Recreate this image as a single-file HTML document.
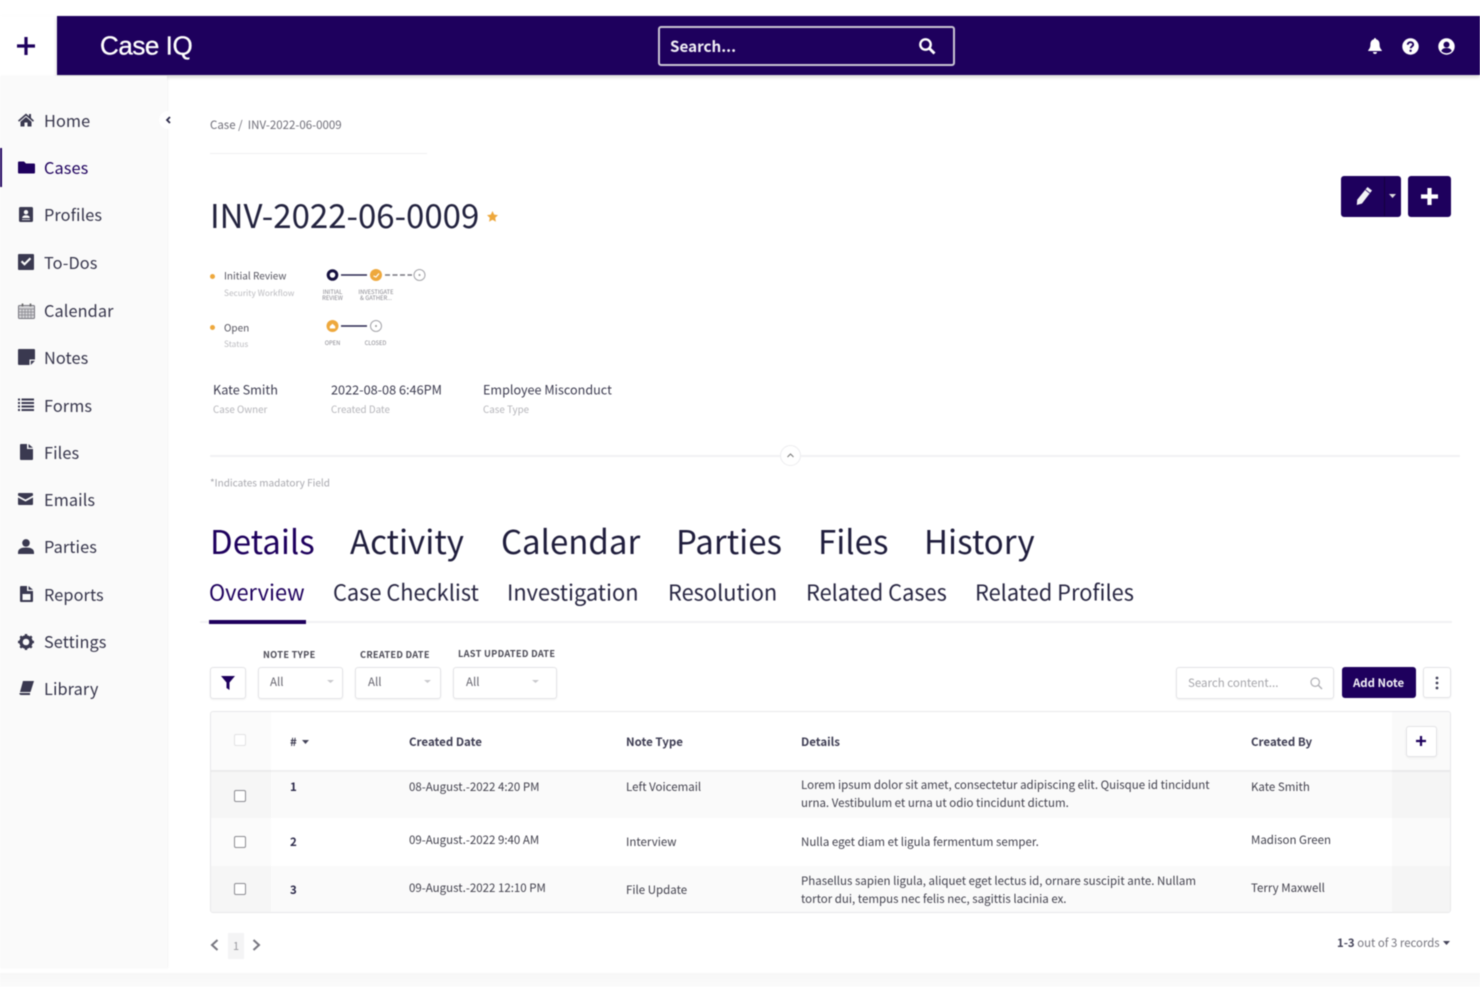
<!DOCTYPE html>
<html><head><meta charset="utf-8"><title>Case IQ</title>
<style>
html,body{margin:0;padding:0;background:#fff}
#p{position:relative;width:1480px;height:987px;overflow:hidden;background:#fff;font-family:"Noto Sans CJK SC","Liberation Sans",sans-serif;color:#2c2a4a;filter:blur(.6px)}
.a{position:absolute}
.t{position:absolute;white-space:nowrap;transform:translateY(-50%)}
.nav{font-size:16.3px;left:44px;color:#35344a;letter-spacing:.1px;margin-top:-.5px}
.tab{font-size:33px;color:#1f1d3c;margin-top:-2px}
.sub{font-size:21.8px;color:#282642;margin-top:-1px}
.lab{font-size:9.2px;font-weight:700;color:#4c4b56;letter-spacing:.3px;margin-top:-.5px}
.cell{font-size:11.5px;color:#42414d;margin-top:-.5px}
.th{font-size:11.5px;font-weight:700;color:#3d3c52}
.box{position:absolute;box-sizing:border-box;border:1px solid #e3e3e6;border-radius:3px;background:#fff;box-shadow:0 1px 2px rgba(0,0,0,.05)}
.cb{position:absolute;box-sizing:border-box;width:12px;height:12px;border:1.5px solid #8c8c92;border-radius:2px;background:#fff;left:233.5px}
svg{position:absolute;overflow:visible}
.ic{fill:#3a3950}
.mini{font-size:5.8px;color:#85848c;line-height:6px;text-align:center;font-weight:400}
</style></head><body><div id="p">

<!-- top bar -->
<div class="a" style="left:0;top:16px;width:57px;height:60px;background:#fff;box-shadow:0 3px 5px rgba(0,0,0,.10)"></div>
<div class="a" style="left:57px;top:16px;width:1423px;height:59px;background:#1e005d;box-shadow:0 2px 4px rgba(0,0,0,.18)"></div>
<svg style="left:16px;top:36px" width="20" height="20"><path d="M10 1V19M1 10H19" stroke="#1e005d" stroke-width="3.2"/></svg>
<div class="t" style="left:100px;top:45.500px;font-size:26px;color:#fff;font-family:'Liberation Sans',sans-serif;letter-spacing:-.45px;-webkit-text-stroke:.3px #fff">Case IQ</div>
<div class="a" style="left:658px;top:26px;width:297px;height:40px;box-sizing:border-box;border:2px solid #c9c6d4;border-radius:3px"></div>
<div class="t" style="left:670px;top:45.500px;font-size:15.200px;font-weight:700;color:#f0eef5">Search...</div>
<svg style="left:918px;top:37px" width="18" height="18"><circle cx="7.500" cy="7.500" r="5.200" fill="none" stroke="#fff" stroke-width="2.400"/><path d="M11.500 11.500L16.500 16.500" stroke="#fff" stroke-width="2.800"/></svg>
<svg style="left:1367px;top:37px" width="16" height="18"><path d="M8 1C8.800 1 9 1.700 9 2.300C11.600 2.900 12.600 5 12.600 7.600C12.600 10.600 13.600 11.800 14.800 13.200V14H1.200V13.200C2.400 11.800 3.400 10.600 3.400 7.600C3.400 5 4.400 2.900 7 2.300C7 1.700 7.200 1 8 1ZM6 15H10C10 16.200 9.100 17 8 17C6.900 17 6 16.200 6 15Z" fill="#fff"/></svg>
<svg style="left:1402px;top:37.500px" width="17" height="17"><circle cx="8.500" cy="8.500" r="8.200" fill="#fff"/><path d="M5.800 6.700C5.800 5.200 7 4.200 8.500 4.200C10 4.200 11.200 5.100 11.200 6.500C11.200 8.300 8.700 8.500 8.700 10.200" fill="none" stroke="#1e005d" stroke-width="1.900"/><circle cx="8.600" cy="12.800" r="1.200" fill="#1e005d"/></svg>
<svg style="left:1438px;top:37.500px" width="17" height="17"><circle cx="8.500" cy="8.500" r="8.200" fill="#fff"/><circle cx="8.500" cy="6.600" r="3" fill="#1e005d"/><path d="M3.300 13C4 10.800 6 10 8.500 10C11 10 13 10.800 13.700 13C12.500 14.400 10.600 15.200 8.500 15.200C6.400 15.200 4.500 14.400 3.300 13Z" fill="#1e005d"/></svg>

<!-- sidebar -->
<div class="a" style="left:0;top:76px;width:167px;height:892px;background:#fafafa;box-shadow:1px 0 2px rgba(0,0,0,.05)"></div>
<div class="a" style="left:0;top:148px;width:2px;height:39px;background:#1e005d"></div>
<div class="a" style="left:159px;top:111px;width:18px;height:18px;border-radius:50%;background:#fff"></div>
<svg style="left:165px;top:116px" width="6" height="8"><path d="M5 1L2 4L5 7" fill="none" stroke="#2c2a4a" stroke-width="1.800"/></svg>

<svg class="ic" style="left:18px;top:113px" width="16" height="14"><path d="M8 .5L0 7.500L1 8.700L8 2.700L15 8.700L16 7.500L13 4.900V1H11V3.200ZM8 4L2.500 8.700V13.500H6.500V9.500H9.500V13.500H13.500V8.700Z"/></svg>
<svg style="left:18px;top:161px" width="17" height="13"><path d="M0 1.500Q0 .5 1 .5H6L8 2.500H16Q17 2.500 17 3.500V11.500Q17 12.500 16 12.500H1Q0 12.500 0 11.500Z" fill="#1e005d"/></svg>
<svg class="ic" style="left:19px;top:207px" width="14" height="15"><path fill-rule="evenodd" d="M1.500 0H12.500Q14 0 14 1.500V13.500Q14 15 12.500 15H1.500Q0 15 0 13.500V1.500Q0 0 1.500 0ZM7 3A2.200 2.200 0 1 0 7 7.400A2.200 2.200 0 1 0 7 3ZM3.200 11H10.800C10.800 9.200 9 8.300 7 8.300C5 8.300 3.200 9.200 3.200 11ZM3 12.200V13H11V12.200Z"/></svg>
<svg class="ic" style="left:18px;top:254px" width="16" height="16"><path fill-rule="evenodd" d="M1 0H15Q16 0 16 1V15Q16 16 15 16H1Q0 16 0 15V1Q0 0 1 0ZM2.800 8L4.300 6.500L6.500 8.700L11.700 3.500L13.200 5L6.500 11.700Z"/></svg>
<svg style="left:18px;top:303px" width="17" height="16"><rect x=".5" y="2.500" width="16" height="13" rx="1" fill="#d4d4d7" stroke="#77767f"/><path d="M.5 6H16.500M4 6V15M7 6V15M10 6V15M13 6V15M.5 9H16.500M.5 12H16.500" stroke="#85848c" stroke-width=".7"/><path d="M4.500 .5V3.500M12.500 .5V3.500" stroke="#666" stroke-width="1.600"/></svg>
<svg class="ic" style="left:18px;top:349px" width="17" height="16"><path d="M1 0H16Q17 0 17 1V10.500H11.500V16H1Q0 16 0 15V1Q0 0 1 0ZM12.800 11.800H17L12.800 16Z"/></svg>
<svg class="ic" style="left:18px;top:398px" width="16" height="14"><path d="M0 .5H2V2.500H0ZM3.500 .5H16V2.500H3.500ZM0 4H2V6H0ZM3.500 4H16V6H3.500ZM0 7.500H2V9.500H0ZM3.500 7.500H16V9.500H3.500ZM0 11H2V13H0ZM3.500 11H16V13H3.500Z"/></svg>
<svg class="ic" style="left:20px;top:444px" width="13" height="16"><path d="M0 1Q0 0 1 0H7V5H13V15Q13 16 12 16H1Q0 16 0 15ZM8.500 0L13 3.800H8.500Z"/></svg>
<svg class="ic" style="left:18px;top:493px" width="15" height="12"><path d="M1 0H14Q15 0 15 1V2.500L7.500 6.500L0 2.500V1Q0 0 1 0ZM0 4.500L7.500 8.500L15 4.500V11Q15 12 14 12H1Q0 12 0 11Z"/></svg>
<svg class="ic" style="left:18px;top:539px" width="16" height="15"><circle cx="8" cy="3.900" r="3.800"/><path d="M0 13.500C0 10 3 8.500 8 8.500C13 8.500 16 10 16 13.500V15H0Z"/></svg>
<svg class="ic" style="left:20px;top:586px" width="13" height="16"><path fill-rule="evenodd" d="M0 1Q0 0 1 0H7V5H13V15Q13 16 12 16H1Q0 16 0 15ZM8.500 0L13 3.800H8.500ZM2.500 8V14H10.500V8Z"/></svg>
<svg style="left:18px;top:634px" width="16" height="16"><circle cx="8" cy="8" r="5" fill="none" stroke="#3a3950" stroke-width="3.400"/><path d="M8 0V16M0 8H16M2.300 2.300L13.700 13.700M13.700 2.300L2.300 13.700" stroke="#3a3950" stroke-width="2.400" stroke-dasharray="2.400 11.200 2.400 0"/></svg>
<svg class="ic" style="left:19px;top:681px" width="15" height="14"><path d="M4 0H15L11.500 11H1ZM1 12H11V14H2.500Q0 14 .5 12Z"/></svg>

<div class="t nav" style="top:120px">Home</div>
<div class="t nav" style="top:167px;color:#1e005d">Cases</div>
<div class="t nav" style="top:214px">Profiles</div>
<div class="t nav" style="top:262px">To-Dos</div>
<div class="t nav" style="top:310px">Calendar</div>
<div class="t nav" style="top:357px">Notes</div>
<div class="t nav" style="top:405px">Forms</div>
<div class="t nav" style="top:452px">Files</div>
<div class="t nav" style="top:499px">Emails</div>
<div class="t nav" style="top:546px">Parties</div>
<div class="t nav" style="top:594px">Reports</div>
<div class="t nav" style="top:641px">Settings</div>
<div class="t nav" style="top:688px">Library</div>

<!-- breadcrumb -->
<div class="t" style="left:210px;top:124.700px;font-size:11.500px;color:#6f6e78">Case / &nbsp;INV-2022-06-0009</div>
<div class="a" style="left:210px;top:153px;width:217px;height:1px;background:#f0f0f1"></div>

<!-- title -->
<div class="t" style="left:210px;top:214px;font-size:33px;color:#22223e">INV-2022-06-0009</div>
<svg style="left:487px;top:210.500px" width="11" height="11"><path d="M5.500 0L7.200 3.600L11 4.100L8.200 6.800L8.900 10.700L5.500 8.800L2.100 10.700L2.800 6.800L0 4.100L3.800 3.600Z" fill="#eea83c"/></svg>

<!-- action buttons -->
<div class="a" style="left:1341px;top:176px;width:60px;height:41px;background:#1e005d;border-radius:3px"></div>
<div class="a" style="left:1384px;top:177px;width:1px;height:39px;background:#14003f"></div>
<svg style="left:1355px;top:186px" width="18" height="20"><path d="M12.500 1L17 4.500L7 17.500L1.800 19L2.200 13.800Z" fill="#f2f2f5"/><path d="M10.500 3.800L14.800 7.200" stroke="#1e005d" stroke-width=".9"/></svg>
<svg style="left:1389px;top:194px" width="7" height="4"><path d="M0 0H7L3.500 4Z" fill="#ddd"/></svg>
<div class="a" style="left:1408px;top:176px;width:43px;height:41px;background:#1e005d;border-radius:3px"></div>
<svg style="left:1421px;top:188px" width="17" height="17"><path d="M8.500 0V17M0 8.500H17" stroke="#fff" stroke-width="4.200"/></svg>

<!-- workflow -->
<div class="a" style="left:210px;top:274px;width:5px;height:5px;border-radius:50%;background:#eea83c"></div>
<div class="t" style="left:224px;top:275.200px;font-size:10px;color:#55545f">Initial Review</div>
<div class="t" style="left:224px;top:293px;font-size:8.300px;color:#bcbcc0">Security Workflow</div>
<svg style="left:326px;top:268px" width="102" height="14"><circle cx="6.500" cy="7" r="4.300" fill="#fff" stroke="#15103f" stroke-width="3"/><path d="M15 7H41" stroke="#2a2850" stroke-width="1.600"/><circle cx="50" cy="7" r="6" fill="#eea83c"/><path d="M47.500 8L50 9L53 5.500" stroke="#fff" stroke-width="1.200" fill="none"/><path d="M59 7H86" stroke="#77767f" stroke-width="1.500" stroke-dasharray="5 2.500"/><circle cx="93.500" cy="7" r="5.500" fill="#fff" stroke="#a5a5aa"/><circle cx="93.500" cy="7" r="1" fill="#999"/></svg>
<div class="a mini" style="left:316.500px;top:288.500px;width:32px">INITIAL<br>REVIEW</div>
<div class="a mini" style="left:351px;top:288.500px;width:50px">INVESTIGATE<br>&amp; GATHER...</div>

<div class="a" style="left:210px;top:325px;width:5px;height:5px;border-radius:50%;background:#eea83c"></div>
<div class="t" style="left:224px;top:327.200px;font-size:10px;color:#55545f">Open</div>
<div class="t" style="left:224px;top:344px;font-size:8.300px;color:#bcbcc0">Status</div>
<svg style="left:326px;top:319px" width="60" height="14"><circle cx="6.500" cy="7" r="6" fill="#eea83c"/><path d="M3.800 7.300L6.500 4.800L9.200 7.300V9.500H3.800Z" fill="#fff"/><path d="M15 7H41" stroke="#2a2850" stroke-width="1.600"/><circle cx="50" cy="7" r="5.500" fill="#fff" stroke="#a5a5aa"/><circle cx="50" cy="7" r="1" fill="#999"/></svg>
<div class="a mini" style="left:316.500px;top:340px;width:32px">OPEN</div>
<div class="a mini" style="left:355.500px;top:340px;width:40px">CLOSED</div>

<!-- meta -->
<div class="t" style="left:213px;top:388.700px;font-size:12.700px;color:#3d3c50">Kate Smith</div>
<div class="t" style="left:213px;top:409px;font-size:9.800px;color:#b5b5ba">Case Owner</div>
<div class="t" style="left:331px;top:388.700px;font-size:12.700px;color:#3d3c50">2022-08-08 6:46PM</div>
<div class="t" style="left:331px;top:409px;font-size:9.800px;color:#b5b5ba">Created Date</div>
<div class="t" style="left:483px;top:388.700px;font-size:12.600px;color:#3d3c50">Employee Misconduct</div>
<div class="t" style="left:483px;top:409px;font-size:9.800px;color:#b5b5ba">Case Type</div>

<div class="a" style="left:210px;top:455px;width:1250px;height:2px;background:#f2f2f3"></div>
<div class="a" style="left:780px;top:445px;width:21px;height:21px;box-sizing:border-box;border-radius:50%;background:#fff;border:1px solid #ededef"></div>
<svg style="left:787px;top:453px" width="7" height="5"><path d="M.5 4L3.500 1L6.500 4" fill="none" stroke="#777" stroke-width="1"/></svg>

<div class="t" style="left:210px;top:482.200px;font-size:10px;color:#a8a8ae">*Indicates madatory Field</div>

<!-- main tabs -->
<div class="t tab" style="left:210px;top:542px;color:#1e005d">Details</div>
<div class="t tab" style="left:350px;top:542px">Activity</div>
<div class="t tab" style="left:501px;top:542px">Calendar</div>
<div class="t tab" style="left:676px;top:542px">Parties</div>
<div class="t tab" style="left:818px;top:542px">Files</div>
<div class="t tab" style="left:924px;top:542px">History</div>

<!-- sub tabs -->
<div class="t sub" style="left:209px;top:593px;color:#1e005d">Overview</div>
<div class="t sub" style="left:333px;top:593px">Case Checklist</div>
<div class="t sub" style="left:507px;top:593px">Investigation</div>
<div class="t sub" style="left:668px;top:593px">Resolution</div>
<div class="t sub" style="left:806px;top:593px">Related Cases</div>
<div class="t sub" style="left:975px;top:593px">Related Profiles</div>
<div class="a" style="left:200px;top:621px;width:1252px;height:2px;background:#f2f2f3"></div>
<div class="a" style="left:209px;top:620px;width:97px;height:4px;background:#1e005d"></div>

<!-- filters -->
<div class="t lab" style="left:263px;top:654px">NOTE TYPE</div>
<div class="t lab" style="left:360px;top:654px">CREATED DATE</div>
<div class="t lab" style="left:458px;top:653px">LAST UPDATED DATE</div>
<div class="box" style="left:210px;top:667px;width:36px;height:32px"></div>
<svg style="left:221px;top:676px" width="14" height="14"><path d="M0 0H14L8.500 6.500V14L5.500 12V6.500Z" fill="#1e005d"/></svg>
<div class="box" style="left:258px;top:667px;width:85px;height:32px"></div>
<div class="box" style="left:355px;top:667px;width:86px;height:32px"></div>
<div class="box" style="left:453px;top:667px;width:104px;height:32px"></div>
<div class="t" style="left:270px;top:682px;font-size:11.500px;color:#66656f">All</div>
<div class="t" style="left:368px;top:682px;font-size:11.500px;color:#66656f">All</div>
<div class="t" style="left:466px;top:682px;font-size:11.500px;color:#66656f">All</div>
<svg style="left:327px;top:680px" width="7" height="4"><path d="M0 0H7L3.500 3Z" fill="#c8c8cc"/></svg>
<svg style="left:424px;top:680px" width="7" height="4"><path d="M0 0H7L3.500 3Z" fill="#c8c8cc"/></svg>
<svg style="left:532px;top:680px" width="7" height="4"><path d="M0 0H7L3.500 3Z" fill="#c8c8cc"/></svg>

<div class="box" style="left:1176px;top:667px;width:158px;height:32px"></div>
<div class="t" style="left:1188px;top:682.500px;font-size:11.500px;color:#a5a5aa">Search content...</div>
<svg style="left:1310px;top:677px" width="13" height="13"><circle cx="5.200" cy="5.200" r="4.200" fill="none" stroke="#b0b0b5" stroke-width="1.200"/><path d="M8.300 8.300L12 12" stroke="#b0b0b5" stroke-width="1.400"/></svg>
<div class="a" style="left:1342px;top:667px;width:74px;height:31px;background:#1e005d;border-radius:3px"></div>
<div class="t" style="left:1353px;top:683px;font-size:11.400px;font-weight:700;color:#f2f0f7">Add Note</div>
<div class="box" style="left:1423px;top:667px;width:28px;height:31px"></div>
<svg style="left:1435px;top:676px" width="4" height="14"><circle cx="2" cy="2" r="1.400" fill="#44435a"/><circle cx="2" cy="7" r="1.400" fill="#44435a"/><circle cx="2" cy="12" r="1.400" fill="#44435a"/></svg>

<!-- table -->
<div class="a" style="left:210px;top:711px;width:1241px;height:202px;box-sizing:border-box;border:1px solid #e8e8ea;border-radius:3px;background:#fff;overflow:hidden">
  <div class="a" style="left:0;top:59px;width:1241px;height:47px;background:#fafafa"></div>
  <div class="a" style="left:0;top:154px;width:1241px;height:47px;background:#fafafa"></div>
  <div class="a" style="left:0;top:58px;width:1241px;height:2px;background:#efeff0"></div>
  <div class="a" style="left:0;top:0;width:60px;height:202px;background:rgba(0,0,0,.014)"></div>
  <div class="a" style="left:1181px;top:0;width:60px;height:202px;background:rgba(0,0,0,.018)"></div>
</div>
<div class="cb" style="top:734px;border-color:#e2e2e4;border-width:1px"></div>
<div class="cb" style="top:790px"></div>
<div class="cb" style="top:836px"></div>
<div class="cb" style="top:883px"></div>

<div class="t th" style="left:290px;top:742px">#</div>
<svg style="left:302px;top:740px" width="7" height="4"><path d="M0 0H7L3.500 4Z" fill="#45445a"/></svg>
<div class="t th" style="left:409px;top:742px">Created Date</div>
<div class="t th" style="left:626px;top:742px">Note Type</div>
<div class="t th" style="left:801px;top:742px">Details</div>
<div class="t th" style="left:1251px;top:742px">Created By</div>
<div class="box" style="left:1406px;top:726px;width:31px;height:31px"></div>
<svg style="left:1416px;top:736px" width="10" height="10"><path d="M5 0V10M0 5H10" stroke="#1e005d" stroke-width="2.200"/></svg>

<div class="t th" style="left:290px;top:787px;color:#2c2a4a">1</div>
<div class="t cell" style="left:409px;top:787px">08-August.-2022 4:20 PM</div>
<div class="t cell" style="left:626px;top:787px">Left Voicemail</div>
<div class="t cell" style="left:801px;top:785px">Lorem ipsum dolor sit amet, consectetur adipiscing elit. Quisque id tincidunt</div>
<div class="t cell" style="left:801px;top:803px">urna. Vestibulum et urna ut odio tincidunt dictum.</div>
<div class="t cell" style="left:1251px;top:787px">Kate Smith</div>

<div class="t th" style="left:290px;top:842px;color:#2c2a4a">2</div>
<div class="t cell" style="left:409px;top:840px">09-August.-2022 9:40 AM</div>
<div class="t cell" style="left:626px;top:842px">Interview</div>
<div class="t cell" style="left:801px;top:842px">Nulla eget diam et ligula fermentum semper.</div>
<div class="t cell" style="left:1251px;top:840px">Madison Green</div>

<div class="t th" style="left:290px;top:890px;color:#2c2a4a">3</div>
<div class="t cell" style="left:409px;top:888px">09-August.-2022 12:10 PM</div>
<div class="t cell" style="left:626px;top:890px">File Update</div>
<div class="t cell" style="left:801px;top:881px">Phasellus sapien ligula, aliquet eget lectus id, ornare suscipit ante. Nullam</div>
<div class="t cell" style="left:801px;top:899px">tortor dui, tempus nec felis nec, sagittis lacinia ex.</div>
<div class="t cell" style="left:1251px;top:888px">Terry Maxwell</div>

<!-- pagination -->
<svg style="left:210px;top:939px" width="9" height="12"><path d="M7.500 1L2 6L7.500 11" fill="none" stroke="#77767f" stroke-width="2"/></svg>
<div class="a" style="left:228px;top:933px;width:16px;height:26px;background:#f4f4f5"></div>
<div class="t" style="left:233px;top:946px;font-size:11px;color:#9a9aa0">1</div>
<svg style="left:252px;top:939px" width="9" height="12"><path d="M1.500 1L7 6L1.500 11" fill="none" stroke="#77767f" stroke-width="2"/></svg>
<div class="t" style="left:1337px;top:942.500px;font-size:11.400px;color:#77767f"><b style="color:#45445a">1-3</b> out of 3 records</div>
<svg style="left:1443px;top:941px" width="7" height="4"><path d="M0 0H7L3.500 4Z" fill="#45445a"/></svg>

<!-- bottom band -->
<div class="a" style="left:0;top:973px;width:1480px;height:14px;background:linear-gradient(#f7f7f7,#fbfbfb)"></div>
</div></body></html>
